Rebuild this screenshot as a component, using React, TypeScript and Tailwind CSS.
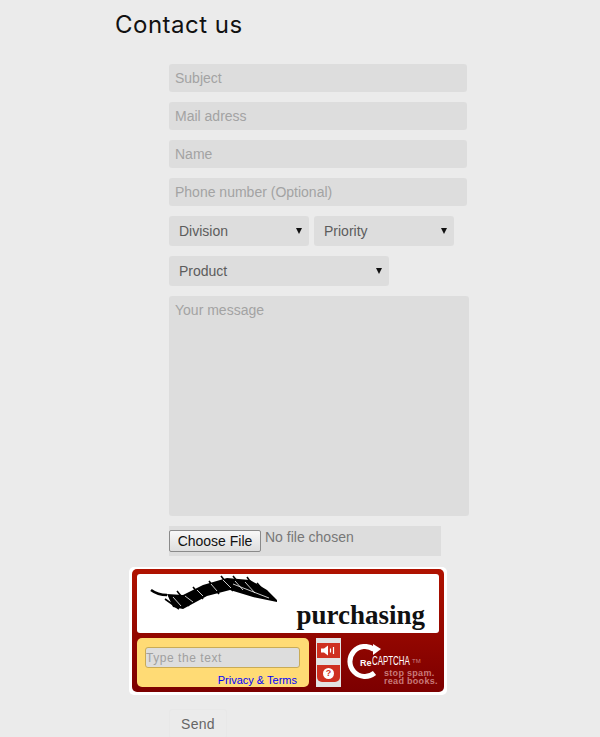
function Field({ label }: { label: string }) {
  return (
    <div className="w-[298px] h-[28px] rounded-[3px] bg-[#dddddd] pl-[6px] flex items-center text-[14px] text-[#a3a3a3]">
      {label}
    </div>
  );
}

function Dropdown({ label, width }: { label: string; width: string }) {
  return (
    <div className={`${width} h-[30px] rounded-[3px] bg-[#dddddd] pl-[10px] pr-[7px] flex items-center justify-between text-[14px] text-[#5c5c5c]`}>
      <span>{label}</span>
      <span className="w-0 h-0 border-x-[3px] border-t-[6px] border-x-transparent border-t-[#111111]" />
    </div>
  );
}

function Captcha() {
  return (
    <div className="w-[318px] h-[128px] -ml-[40px] mt-[11px] rounded-[5px] bg-white pt-[2px] pb-[3px] px-[3px]">
      <div className="h-full rounded-[5px] bg-gradient-to-b from-[#b01200] to-[#7c0000] pt-[5px] px-[5px]">
        <div className="w-[302px] h-[59px] rounded-[3px] bg-white flex items-end justify-end pr-[14px] relative">
          {/* distorted captcha word */}
          <svg className="absolute left-[12px] top-[1px]" width="132" height="36" viewBox="0 0 132 36">
            <path d="M2 15 C6 18 10 20 18 20" fill="none" stroke="#000" strokeWidth="2.5" />
            <path d="M18 19 L34 20 L54 10 L78 3 L101 5 L118 15 L128 25 L128 27 L104 22 L81 15 L58 21 L34 34 L24 32 Z" fill="#000" />
            <path d="M16 24 L30 34 M28 16 L40 31 M44 12 L54 24 M60 6 L70 19 M72 1 L84 16 M84 1 L98 18 M98 2 L112 22 M108 8 L122 24" fill="none" stroke="#000" strokeWidth="1.6" />
            <path d="M24 22 L32 31 M36 21 L44 27 M48 15 L54 21 M62 9 L68 16 M74 5 L82 13 M86 6 L94 15 M96 7 L106 18 M84 9 L120 23" fill="none" stroke="#fff" strokeWidth="0.8" />
          </svg>
          <span className="font-['Liberation_Serif',serif] font-bold text-[27px] leading-[35px] text-[#111111]">purchasing</span>
        </div>
        <div className="flex mt-[5px]">
          <div className="w-[172px] h-[49px] rounded-[5px] bg-[#ffdb75] pt-[9px] pl-[8px] pr-[9px]">
            <div className="h-[21px] rounded-[3px] border border-[#c9ab55] bg-[#dddddd] flex items-center text-[12px] tracking-[0.55px] text-[#a0a0a0]">
              Type the text
            </div>
            <div className="text-right text-[11px] leading-[13px] text-[#0000ff] mt-[6px] pr-[3px]">Privacy &amp; Terms</div>
          </div>
          <div className="w-[25px] h-[49px] ml-[7px] bg-[#e3e3e3] flex flex-col pt-[5px] pb-[5px] px-[1px] justify-between">
            <div className="h-[15px] bg-[#cf3020] flex items-center justify-center">
              <svg width="15" height="11" viewBox="0 0 15 11">
                <path d="M0 3.5 H3 L7 0.5 V10.5 L3 7.5 H0 Z" fill="#fff" />
                <path d="M9.5 3.5 V7.5 M12.5 2 V9" stroke="#fff" strokeWidth="1.2" />
              </svg>
            </div>
            <div className="h-[17px] rounded-b-[5px] bg-[#cf3020] flex items-center justify-center">
              <span className="w-[11px] h-[11px] rounded-full bg-white text-[#cf3020] text-[9px] leading-[11px] font-bold text-center">?</span>
            </div>
          </div>
          <div className="relative flex-1 ml-[6px]">
            {/* recaptcha arrow */}
            <svg className="absolute left-0 top-[6px]" width="36" height="36" viewBox="0 0 36 36">
              <path d="M27 5.5 A15 15 0 1 0 27.5 29" fill="none" stroke="#fff" strokeWidth="5" />
              <path d="M26 0 L34 5 L26 11 Z" fill="#fff" />
            </svg>
            <span className="absolute left-[13px] top-[21px] text-[9px] leading-[8px] font-bold text-white">Re</span>
            <span className="absolute left-[25px] top-[17px] text-[12px] leading-[13px] text-white [transform:scaleX(0.66)] origin-left whitespace-nowrap">CAPTCHA</span>
            <span className="absolute left-[65px] top-[20px] text-[6px] leading-[7px] text-[#c98080]">TM</span>
            <div className="absolute left-[37px] top-[31px] text-[9px] leading-[8px] font-bold tracking-[0.3px] text-[#c87a7a] whitespace-nowrap">
              <div>stop spam.</div>
              <div>read books.</div>
            </div>
          </div>
        </div>
      </div>
    </div>
  );
}

export default function App() {
  return (
    <div className="w-[600px] h-[737px] overflow-hidden bg-[#ebebeb] font-['Liberation_Sans',sans-serif] pl-[115px] pt-[10px]">
      <h1 className="font-['Inter',sans-serif] text-[24px] leading-[30px] tracking-[0.5px] text-[#111111]">Contact us</h1>
      <form className="ml-[54px] mt-[24px] flex flex-col">
        <div className="flex flex-col gap-[10px]">
          <Field label="Subject" />
          <Field label="Mail adress" />
          <Field label="Name" />
          <Field label="Phone number (Optional)" />
        </div>
        <div className="flex gap-[5px] mt-[10px]">
          <Dropdown label="Division" width="w-[140px]" />
          <Dropdown label="Priority" width="w-[140px]" />
        </div>
        <div className="mt-[10px]">
          <Dropdown label="Product" width="w-[220px]" />
        </div>
        <div className="w-[300px] h-[220px] mt-[10px] rounded-[3px] bg-[#dddddd] pl-[6px] pt-[5px] text-[14px] leading-[18px] text-[#a3a3a3]">
          Your message
        </div>
        <div className="w-[272px] h-[30px] mt-[10px] bg-[#dddddd] flex items-start">
          <div className="w-[92px] h-[22px] mt-[4px] rounded-[2px] border border-[#8a8a8a] bg-gradient-to-b from-[#f8f8f8] to-[#dedede] flex items-center justify-center text-[14px] text-[#111111]">
            Choose File
          </div>
          <span className="ml-[4px] text-[14px] leading-[22px] text-[#777777]">No file chosen</span>
        </div>
        <Captcha />
        <div className="w-[58px] h-[30px] mt-[14px] flex items-center justify-center rounded-[3px] border border-[#e8e8e8] text-[14px] tracking-[0.3px] text-[#666666]">
          Send
        </div>
      </form>
    </div>
  );
}
